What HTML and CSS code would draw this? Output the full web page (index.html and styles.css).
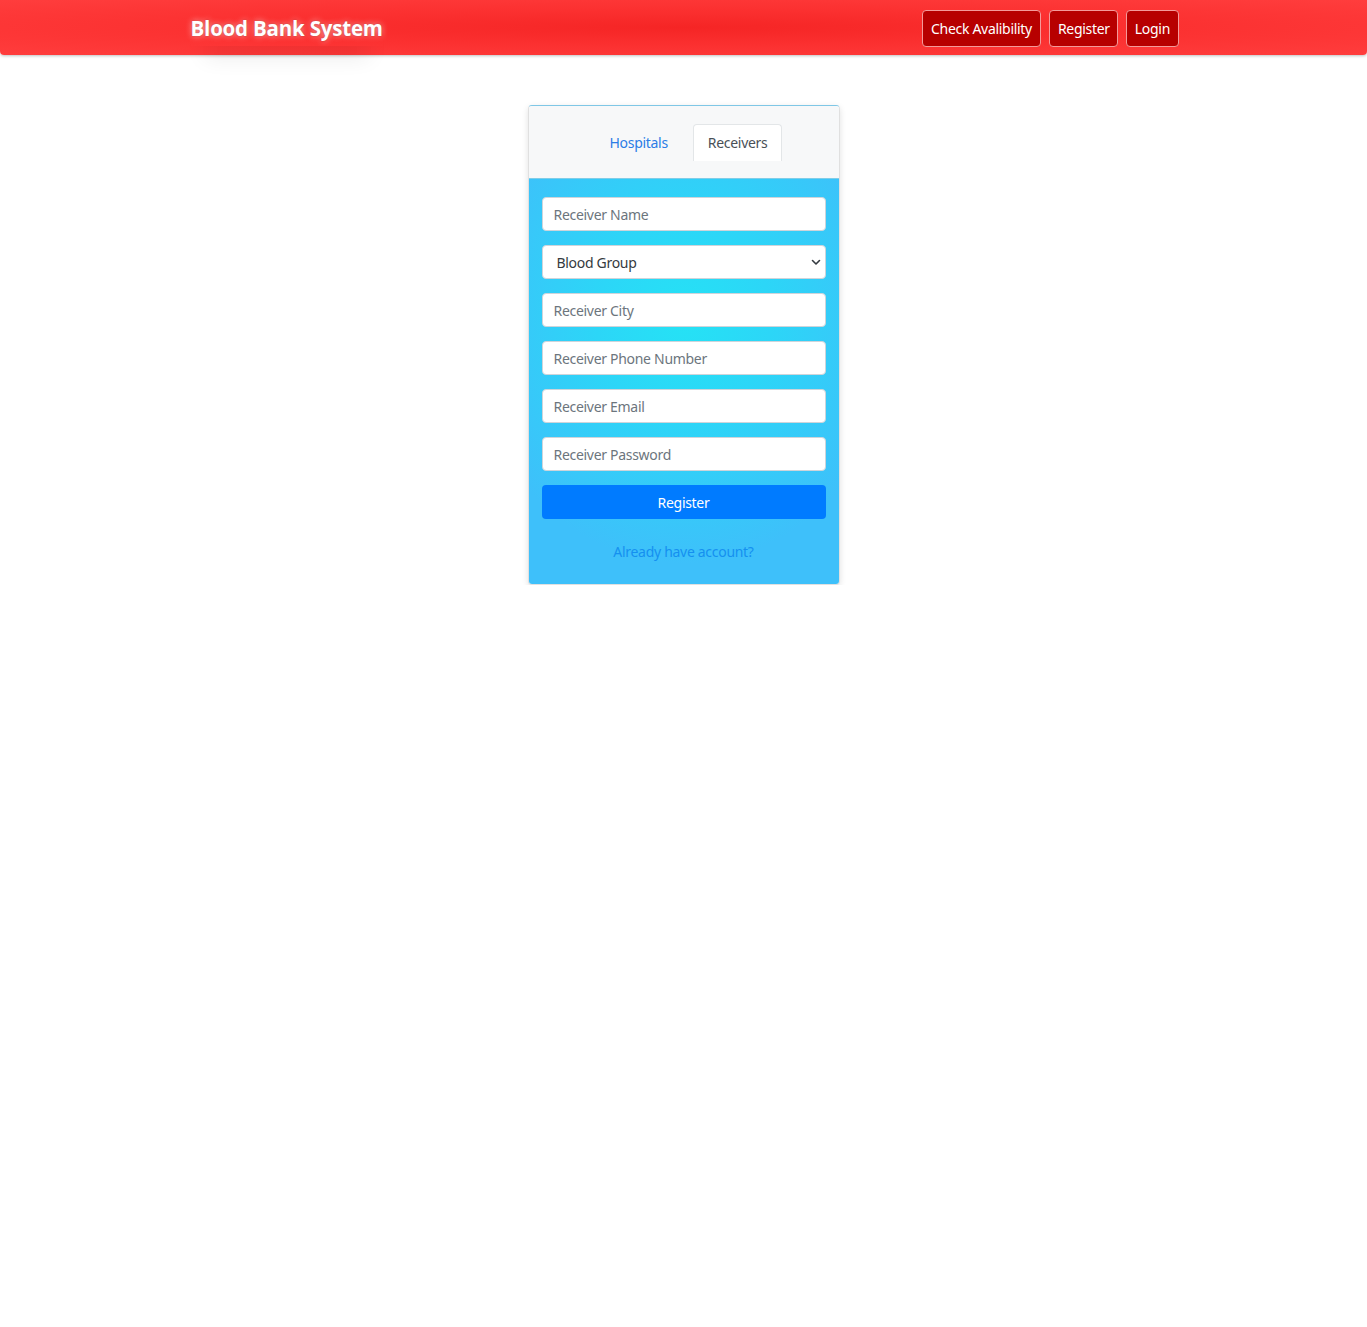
FILE: index.html
```html
<!DOCTYPE html>
<html lang="en">
<head>
<meta charset="utf-8">
<title>Blood Bank System</title>
<link rel="stylesheet" href="styles.css">
</head>
<body>
<header class="navbar">
  <div class="nav-inner">
    <a class="brand" href="#">Blood Bank System</a>
    <div class="nav-actions">
      <a class="nav-btn" href="#">Check Avalibility</a>
      <a class="nav-btn" href="#">Register</a>
      <a class="nav-btn" href="#">Login</a>
    </div>
  </div>
</header>
<main class="main">
  <div class="card">
    <div class="card-header">
      <ul class="tabs">
        <li><a class="tab" href="#">Hospitals</a></li>
        <li><a class="tab active" href="#">Receivers</a></li>
      </ul>
    </div>
    <form class="card-body">
      <input class="field" type="text" placeholder="Receiver Name">
      <div class="select-wrap">
        <select class="field select">
          <option>Blood Group</option>
        </select>
        <svg class="chev" width="10" height="8" viewBox="0 0 10 8"><path d="M1.5 2.5 L5 6 L8.5 2.5" fill="none" stroke="#343a40" stroke-width="1.6" stroke-linecap="round" stroke-linejoin="round"/></svg>
      </div>
      <input class="field" type="text" placeholder="Receiver City">
      <input class="field" type="text" placeholder="Receiver Phone Number">
      <input class="field" type="email" placeholder="Receiver Email">
      <input class="field" type="password" placeholder="Receiver Password">
      <button class="submit" type="button">Register</button>
      <a class="login-link" href="#">Already have account?</a>
    </form>
  </div>
</main>
</body>
</html>
```
FILE: styles.css
```css
* { box-sizing: border-box; }
html, body { margin: 0; padding: 0; background: #fff; }
body {
  font-family: "Noto Sans", "Open Sans", sans-serif;
  font-size: 14px;
  letter-spacing: -0.3px;
  color: #212529;
}
a { text-decoration: none; }

.navbar {
  height: 55px;
  background: radial-gradient(ellipse at 50% 50%, #f52525 0%, #fb3030 45%, #ff3d3d 100%);
  border-radius: 0 0 4px 4px;
  box-shadow: 0 1px 3px rgba(0,0,0,0.25);
}
.nav-inner {
  width: 1026px;
  margin: 0 auto;
  height: 100%;
  display: flex;
  align-items: center;
  justify-content: space-between;
  padding: 0 18px 0 20px;
}
.brand {
  color: #fff;
  font-family: "Open Sans", "Noto Sans", sans-serif;
  font-weight: 700;
  font-size: 20.5px;
  letter-spacing: -0.2px;
  text-shadow: 0 0 6px rgba(255,255,255,0.6), 0 0 2px rgba(120,0,0,0.6);
  box-shadow: 0 22px 22px -14px rgba(0,0,0,0.16);
  padding: 4px 0;
}
.nav-actions {
  display: flex;
  gap: 8px;
  margin-top: 1px;
}
.nav-btn {
  display: block;
  height: 37px;
  line-height: 35px;
  padding: 0 7.5px;
  background: #b70000;
  color: #fff;
  border: 1px solid #f49a9a;
  border-radius: 4px;
  font-size: 14px;
}
.nav-btn:first-child { padding: 0 8.5px; }

.main {
  display: flex;
  justify-content: center;
  padding-top: 50px;
}
.card {
  width: 312px;
  border: 1px solid rgba(0,0,0,0.12);
  border-top-color: #7fc7e6;
  border-radius: 4px;
  overflow: hidden;
  box-shadow: 0 2px 6px rgba(0,0,0,0.12);
}
.card-header {
  background: #f7f8f9;
  padding: 18px 0 0;
  height: 73px;
  border-bottom: 1px solid #7fcde8;
}
.tabs {
  list-style: none;
  margin: 0;
  padding: 0 0 0 10px;
  display: flex;
  justify-content: center;
}
.tab {
  display: block;
  height: 37px;
  line-height: 36px;
  padding: 0 14px;
  color: #2b7de6;
  border: 1px solid transparent;
  border-bottom: none;
  border-radius: 4px 4px 0 0;
  margin: 0 5px;
}
.tab.active {
  background: #fff;
  color: #495057;
  border-color: #e3e6e8;
}

.card-body {
  margin: 0;
  padding: 18px 13px 23px;
  display: flex;
  flex-direction: column;
  gap: 14px;
  background: radial-gradient(ellipse 70% 60% at 50% 35%, #25e2f5 0%, #2cd6f7 40%, #3ec0fa 100%);
}
.field {
  display: block;
  width: 100%;
  height: 34px;
  padding: 0 11px;
  border: 1px solid #ced4da;
  border-radius: 4px;
  background: #fff;
  font-family: inherit;
  font-size: 14px;
  letter-spacing: -0.3px;
  color: #495057;
  outline: none;
}
.field::placeholder { color: #6c757d; }
.select-wrap { position: relative; }
.select {
  appearance: none;
  -webkit-appearance: none;
  padding-left: 14px;
  color: #343a40;
}
.chev {
  position: absolute;
  right: 5px;
  top: 13px;
  pointer-events: none;
}
.submit {
  height: 34px;
  width: 100%;
  border: none;
  border-radius: 4px;
  background: #007bff;
  color: #fff;
  font-family: inherit;
  font-size: 14px;
  letter-spacing: -0.3px;
}
.login-link {
  display: block;
  text-align: center;
  color: #1590f0;
  font-size: 14px;
  margin-top: 9px;
}
```
